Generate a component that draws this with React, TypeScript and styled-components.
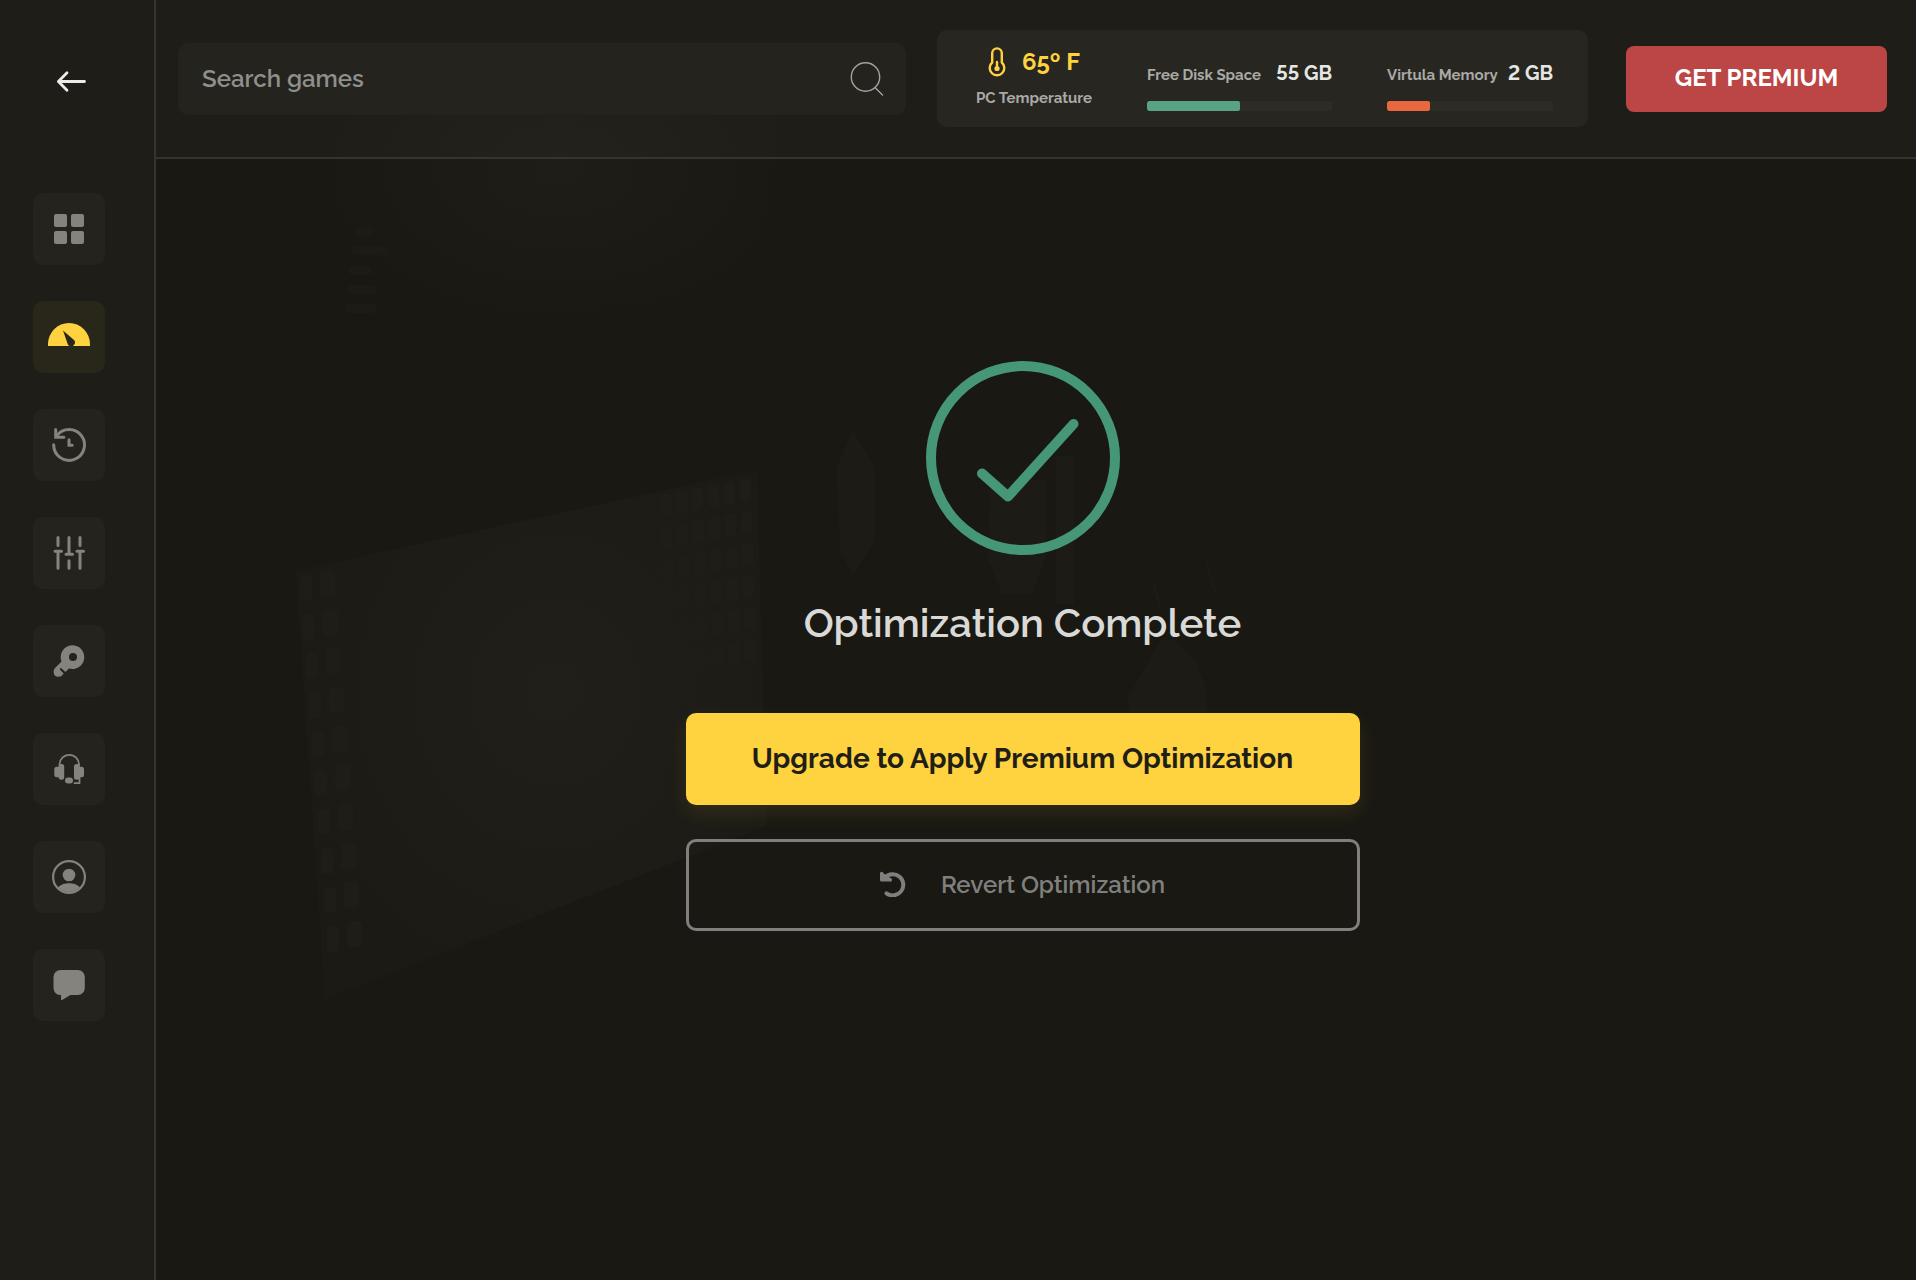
import React from "react";
import styled, { createGlobalStyle } from "styled-components";

const color = {
  page: "#191813",
  line: "#353430",
  tile: "#24231e",
  panel: "#272620",
  yellow: "#ffd23f",
  green: "#57a383",
  check: "#469678",
  orange: "#e96840",
  red: "#bc4545",
  icon: "#84837e",
  muted: "#a9a9a6",
};

const GlobalStyle = createGlobalStyle`
  *, *::before, *::after { box-sizing: border-box; }
  body { margin: 0; background: ${color.page}; }
  body, button, input {
    font-family: Raleway, Lato, "Open Sans", sans-serif;
  }
  button { border: 0; padding: 0; cursor: pointer; }
`;

const Shell = styled.div`
  position: relative;
  isolation: isolate;
  display: grid;
  grid-template-columns: 156px minmax(0, 1fr);
  min-height: 100vh;
`;

const Backdrop = styled.svg`
  position: absolute;
  inset: 0;
  z-index: -1;
  width: 100%;
  height: 100%;
`;

const Sidebar = styled.aside`
  padding: 45px 0 36px 33px;
  border-right: 2px solid ${color.line};
  background: rgba(255, 255, 255, 0.022);
`;

const Nav = styled.nav`
  display: flex;
  flex-direction: column;
  gap: 36px;
  margin-top: 76px;
`;

const TileButton = styled.button<{ $active?: boolean; $plain?: boolean }>`
  display: block;
  width: 72px;
  height: 72px;
  border-radius: 10px;
  color: ${(p) => (p.$active ? color.yellow : p.$plain ? "#ebebe9" : color.icon)};
  background: ${(p) => (p.$active ? "#29261a" : p.$plain ? "transparent" : color.tile)};

  svg { display: block; }
`;

const Column = styled.div`
  display: flex;
  flex-direction: column;
`;

const Header = styled.header`
  display: flex;
  align-items: center;
  height: 159px;
  padding: 0 29px 0 22px;
  border-bottom: 2px solid ${color.line};
  background: rgba(255, 255, 255, 0.022);
`;

const SearchBox = styled.label`
  display: flex;
  flex: 1;
  align-items: center;
  height: 72px;
  padding: 0 22px 0 24px;
  border-radius: 10px;
  background: ${color.tile};
`;

const SearchInput = styled.input`
  flex: 1;
  min-width: 0;
  padding: 0;
  border: 0;
  outline: 0;
  background: transparent;
  color: #ddd;
  font-size: 24px;
  font-weight: 600;

  &::placeholder { color: #8f8f8c; opacity: 1; }
`;

const Stats = styled.section`
  display: flex;
  gap: 55px;
  height: 97px;
  margin: 0 38px 0 31px;
  padding: 17px 35px 0 39px;
  border-radius: 10px;
  background: ${color.panel};
`;

const Temperature = styled.div`
  display: flex;
  flex-direction: column;
  align-items: center;
  gap: 9px;
`;

const Reading = styled.div`
  display: flex;
  align-items: center;
  gap: 16px;
  color: ${color.yellow};
  font-size: 24px;
  font-weight: 700;
  line-height: 30px;
`;

const StatLabel = styled.span`
  color: ${color.muted};
  font-size: 15px;
  font-weight: 700;
  line-height: 24px;
  white-space: nowrap;
`;

const Meter = styled.div<{ $width: number }>`
  width: ${(p) => p.$width}px;
  padding-top: 14px;
`;

const MeterHead = styled.div`
  display: flex;
  align-items: baseline;
  justify-content: space-between;
  height: 24px;
`;

const MeterValue = styled.strong`
  color: #e6e6e4;
  font-size: 20px;
  font-weight: 700;
  font-variant-numeric: lining-nums;
  line-height: 24px;
  white-space: nowrap;
`;

const Track = styled.div`
  height: 10px;
  margin-top: 16px;
  overflow: hidden;
  border-radius: 2px;
  background: #2d2c26;
`;

const Fill = styled.div<{ $color: string }>`
  height: 100%;
  border-radius: 2px;
  background: ${(p) => p.$color};
`;

const PremiumButton = styled.button`
  width: 261px;
  height: 66px;
  padding-bottom: 2px;
  border-radius: 8px;
  background: ${color.red};
  color: #fff;
  font-size: 24px;
  font-weight: 700;
`;

const Main = styled.main`
  display: flex;
  flex: 1;
  flex-direction: column;
  align-items: center;
  padding: 202px 27px 48px 0;
`;

const Title = styled.h1`
  margin: 44px 0 66px;
  color: #d9d9d7;
  font-size: 40px;
  font-weight: 600;
  line-height: 48px;
`;

const Actions = styled.div`
  display: flex;
  flex-direction: column;
  gap: 34px;
  width: 100%;
  max-width: 674px;
`;

const ActionButton = styled.button<{ $outline?: boolean }>`
  display: flex;
  align-items: center;
  justify-content: center;
  gap: 35px;
  height: 92px;
  padding-bottom: 2px;
  border: ${(p) => (p.$outline ? "3px solid #7f7f7d" : "0")};
  border-radius: 10px;
  background: ${(p) => (p.$outline ? "transparent" : color.yellow)};
  box-shadow: ${(p) => (p.$outline ? "none" : "0 8px 20px rgba(255, 210, 63, 0.1)")};
  color: ${(p) => (p.$outline ? "#7f7f7d" : "#1f1e17")};
  font-size: ${(p) => (p.$outline ? 24 : 28)}px;
  font-weight: ${(p) => (p.$outline ? 600 : 700)};
`;

const stroke = { fill: "none", stroke: "currentColor", strokeLinecap: "round", strokeLinejoin: "round" } as const;

function TileIcon({ children }: { children: React.ReactNode }) {
  return (
    <svg width="72" height="72" viewBox="0 0 72 72" fill="currentColor" aria-hidden="true">
      {children}
    </svg>
  );
}

const navItems = [
  {
    label: "Dashboard",
    art: [21, 38].flatMap((y) =>
      [21, 38].map((x) => <rect key={`${x}-${y}`} x={x} y={y} width="13" height="13" rx="2" />)
    ),
  },
  {
    label: "Optimize",
    active: true,
    art: (
      <>
        <path d="M15 45v-2a21 21 0 0 1 42 0v2z" />
        <path fill="#29261a" d="M30 29.5l11 9.6a3.6 3.6 0 0 1-.2 5L40 45h-3.5c-1-.6-1.500-1.300-1.900-2.300z" />
      </>
    ),
  },
  {
    label: "History",
    art: (
      <g {...stroke} strokeWidth="3">
        <path d="M20.700 35.800A15.400 15.400 0 1 0 23.600 27" />
        <path d="M22.700 20.500v7.800h8.200M36 30.800v5.500h3.200" strokeLinejoin="miter" />
      </g>
    ),
  },
  {
    label: "Settings",
    art: (
      <path
        {...stroke}
        strokeWidth="3"
        d="M25 20.500v8M22 34.300h6.500M25 34.300v17M36 20.500v16.800M33 37.300h6.500M36 43.800v7.500M47 20.500v8M44 34.300h6.500M47 34.300v17"
      />
    ),
  },
  {
    label: "Licence key",
    art: (
      <path
        fillRule="evenodd"
        d="M40 20.300a11.900 11.900 0 1 1-4 23.300L32.400 47l-4-3.800c-.9-.5-1.900.5-1.400 1.500l3.700 3.800-2 2.300c-1 1-3.500 1.100-5.200.7-1.800-.5-2.400-1.600-2.700-3.500-.3-2-.1-3.600 1-4.700l6.700-6.700A11.900 11.900 0 0 1 40 20.300zm0 7.800a4 4 0 1 0 0 8 4 4 0 1 0 0-8z"
      />
    ),
  },
  {
    label: "Support",
    art: (
      <>
        <path {...stroke} strokeWidth="1.800" d="M26.600 33v-1.500a9.700 9.700 0 0 1 19.400 0V33M46.500 44v6.200H41.500" />
        <rect x="25.700" y="31" width="5.500" height="15.700" rx="2.500" />
        <rect x="41" y="31" width="5.500" height="15.700" rx="2.500" />
        <rect x="21.300" y="33.700" width="7" height="10.600" rx="2.500" />
        <rect x="44" y="33.700" width="7" height="10.600" rx="2.500" />
        <rect x="32" y="44.600" width="8" height="6" rx="3" />
      </>
    ),
  },
  {
    label: "Account",
    art: (
      <>
        <circle cx="36" cy="36" r="15.900" fill="none" stroke="currentColor" strokeWidth="2.200" />
        <circle cx="36" cy="34" r="6.300" />
        <path d="M25 46.500C28 43 32 42.200 36 42.200S44 43 47 46.500A15.900 15.900 0 0 1 25 46.500z" />
      </>
    ),
  },
  {
    label: "Messages",
    art: (
      <path d="M27.500 21h17.300a7 7 0 0 1 7 7v11a7 7 0 0 1-7 7H37.500l-8 4.800c-.9.500-1.500 0-1.500-.9V46a7 7 0 0 1-7.500-7V28a7 7 0 0 1 7-7z" />
    ),
  },
];

function RoomBackdrop() {
  return (
    <Backdrop viewBox="0 0 1916 1280" preserveAspectRatio="xMinYMin slice" aria-hidden="true">
      <defs>
        <radialGradient id="screenGlow" cx="0.55" cy="0.42" r="0.6">
          <stop offset="0" stopColor="#201f1a" />
          <stop offset="1" stopColor="#1b1a15" />
        </radialGradient>
        <radialGradient id="topGlow" cx="0.5" cy="0.45" r="0.55">
          <stop offset="0" stopColor="#1e1d18" />
          <stop offset="1" stopColor="#191813" />
        </radialGradient>
      </defs>
      <path d="M330 120L790 40L755 300L330 330z" fill="url(#topGlow)" />
      <path d="M296 571L757 470L766 826L325 999z" fill="url(#screenGlow)" />
      <g fill="#1e1d18">
        {[0, 1, 2, 3, 4, 5].map((r) =>
          [0, 1, 2, 3, 4, 5].map((c) => (
            <rect key={`${r}${c}`} x={660 + c * 16 + r} y={494 - c * 3 + r * 32} width="11" height="23" rx="3" />
          ))
        )}
        {[0, 1, 2, 3, 4, 5, 6, 7, 8, 9].map((r) => (
          <React.Fragment key={r}>
            <rect x={300 + r * 3} y={575 + r * 39} width="12" height="26" rx="4" />
            <rect x={320 + r * 3} y={570 + r * 39} width="15" height="26" rx="4" />
          </React.Fragment>
        ))}
      </g>
      <g fill="#1c1b16">
        <rect x="354" y="228" width="20" height="8" rx="3" />
        <rect x="352" y="246" width="36" height="9" rx="3" />
        <rect x="349" y="266" width="22" height="9" rx="3" />
        <rect x="348" y="285" width="28" height="9" rx="3" />
        <rect x="346" y="304" width="31" height="9" rx="3" />
        <path d="M836 467l17-36 22 36v74l-22 34-13-24z" />
        <path d="M990 480h56v76l-14 38h-30l-14-34z" />
        <path d="M1161 640h14l22 24 9 24v24h-76l-3-14z" />
        <path d="M1056 456h18v148h-18zM1150 574l12 30-4 4zM1203 546l14 48-6-8z" />
      </g>
    </Backdrop>
  );
}

function MeterStat(props: { id: string; label: string; value: string; percent: number; fill: string; width: number }) {
  return (
    <Meter $width={props.width}>
      <MeterHead>
        <StatLabel id={props.id}>{props.label}</StatLabel>
        <MeterValue>{props.value}</MeterValue>
      </MeterHead>
      <Track role="meter" aria-labelledby={props.id} aria-valuemin={0} aria-valuemax={100} aria-valuenow={props.percent}>
        <Fill $color={props.fill} style={{ width: `${props.percent}%` }} />
      </Track>
    </Meter>
  );
}

export default function App() {
  return (
    <>
      <GlobalStyle />
      <Shell>
        <RoomBackdrop />
        <Sidebar>
          <TileButton $plain type="button" aria-label="Back">
            <TileIcon>
              <path {...stroke} strokeWidth="2.800" d="M34 27.800L25.400 36.500L34 45.200M25.600 36.500H51.500" />
            </TileIcon>
          </TileButton>
          <Nav aria-label="Main">
            {navItems.map((item) => (
              <TileButton key={item.label} type="button" $active={item.active} aria-label={item.label}>
                <TileIcon>{item.art}</TileIcon>
              </TileButton>
            ))}
          </Nav>
        </Sidebar>
        <Column>
          <Header>
            <SearchBox>
              <SearchInput type="text" placeholder="Search games" aria-label="Search games" />
              <svg width="34" height="34" viewBox="0 0 34 34" fill="none" stroke="#a3a3a0" strokeWidth="1.400" strokeLinecap="round" aria-hidden="true">
                <circle cx="15.500" cy="15" r="14.200" />
                <path d="M25 25.500L32.500 33" />
              </svg>
            </SearchBox>
            <Stats aria-label="System status">
              <Temperature>
                <Reading>
                  <svg width="18" height="30" viewBox="0 0 18 30" fill="none" stroke="currentColor" strokeWidth="2.400" aria-hidden="true">
                    <path d="M4.200 15.500V6.200a4.800 4.800 0 0 1 9.600 0v9.300a7.300 7.300 0 1 1-9.600 0z" />
                    <path d="M9 15v6" strokeLinecap="round" />
                    <circle cx="9" cy="21.500" r="2.600" fill="currentColor" stroke="none" />
                  </svg>
                  <span>65º F</span>
                </Reading>
                <StatLabel>PC Temperature</StatLabel>
              </Temperature>
              <MeterStat id="disk" label="Free Disk Space" value="55 GB" percent={50} fill={color.green} width={185} />
              <MeterStat id="memory" label="Virtula Memory" value="2 GB" percent={26} fill={color.orange} width={166} />
            </Stats>
            <PremiumButton type="button">GET PREMIUM</PremiumButton>
          </Header>
          <Main>
            <svg width="194" height="194" viewBox="0 0 194 194" fill="none" stroke={color.check} strokeWidth="10" strokeLinecap="round" strokeLinejoin="round" aria-hidden="true">
              <circle cx="97" cy="97" r="92" />
              <path d="M56 112.500L82 135.500L147.500 63" />
            </svg>
            <Title>Optimization Complete</Title>
            <Actions>
              <ActionButton type="button">Upgrade to Apply Premium Optimization</ActionButton>
              <ActionButton type="button" $outline>
                <svg width="26" height="26" viewBox="0 0 26 26" aria-hidden="true">
                  <path {...stroke} strokeWidth="4" d="M6.500 22.400A10.600 10.600 0 1 0 5 6.500" />
                  <path fill="currentColor" d="M0 2.500a1.700 1.700 0 0 1 3.400-.3L10.500 7a1.800 1.800 0 0 1-.7 3.600H1.600A1.600 1.600 0 0 1 0 9z" />
                </svg>
                Revert Optimization
              </ActionButton>
            </Actions>
          </Main>
        </Column>
      </Shell>
    </>
  );
}
